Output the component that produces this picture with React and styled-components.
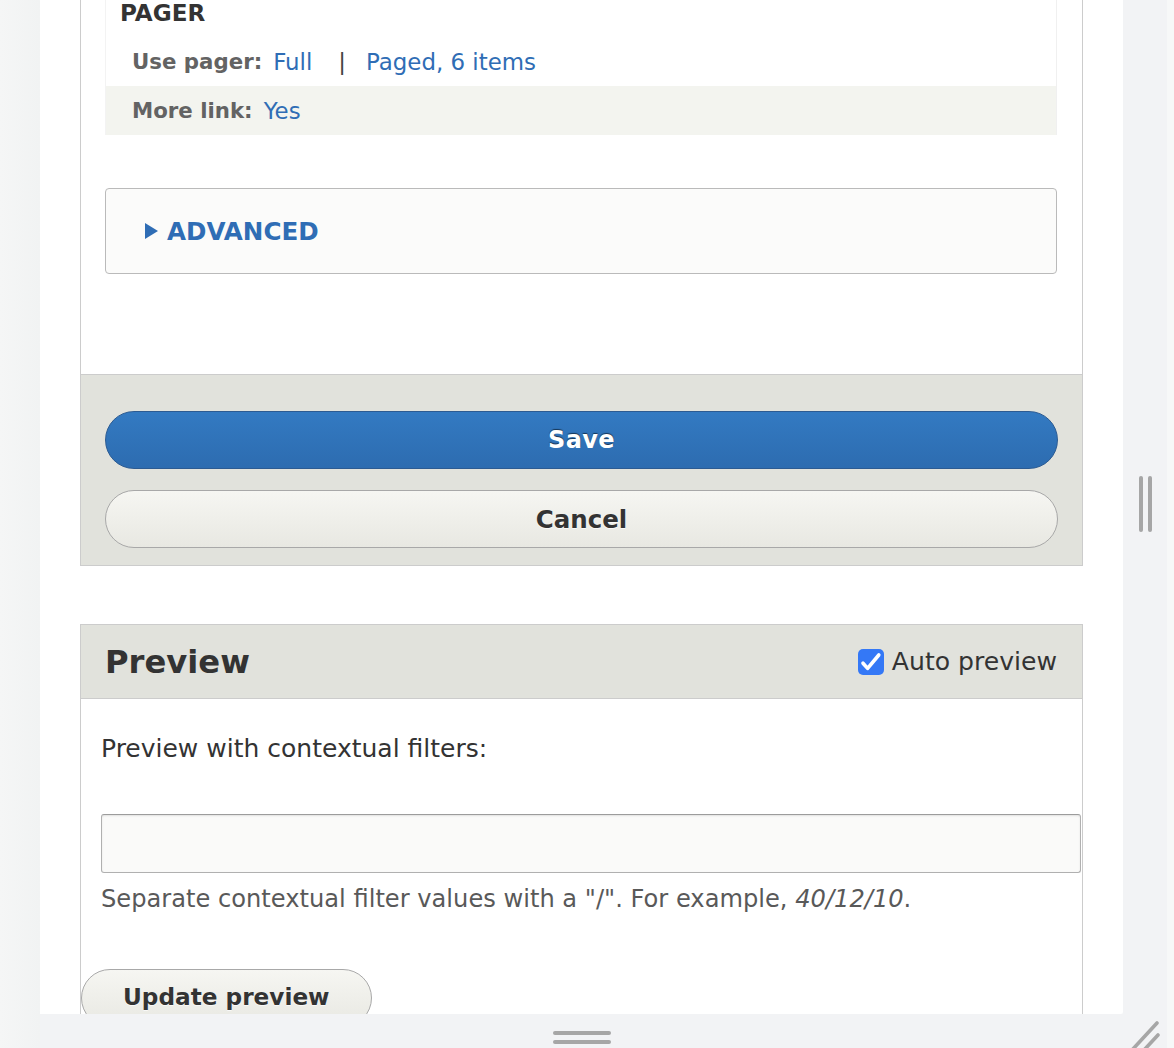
import React from "react";
import styled, { createGlobalStyle } from "styled-components";

const Global = createGlobalStyle`
  html, body { margin: 0; padding: 0; }
  body {
    width: 1174px;
    height: 1048px;
    overflow: hidden;
    font-family: "DejaVu Sans", "Liberation Sans", sans-serif;
    color: #333;
    background: #f7f8f8;
  }
  * { box-sizing: border-box; }
`;

const Shell = styled.div`
  display: grid;
  grid-template-columns: 40px 1083px 44px 7px;
  grid-template-rows: 1014px 34px;
  width: 1174px;
  height: 1048px;
  overflow: hidden;
`;

const LeftStrip = styled.div`
  grid-column: 1;
  grid-row: 1 / span 2;
  background: linear-gradient(to right, #f5f6f6, #f1f3f3);
`;

const FarStrip = styled.div`
  grid-column: 4;
  grid-row: 1 / span 2;
  background: #f7f8f8;
`;

const Frame = styled.div`
  grid-column: 2;
  grid-row: 1;
  background: #fff;
  overflow: hidden;
  border-bottom-right-radius: 3px;
  padding: 0 40px;
`;

const Scroller = styled.div`
  margin-top: -2px;
  display: flex;
  flex-direction: column;
`;

const SideBar = styled.div`
  grid-column: 3;
  grid-row: 1;
  background: #f2f3f5;
  display: flex;
  align-items: center;
  justify-content: center;
  gap: 5px;
  padding-bottom: 6px;
`;

const VGrip = styled.span`
  display: block;
  width: 4px;
  height: 56px;
  border-radius: 2px;
  background: #a6a6a6;
`;

const BottomBar = styled.div`
  grid-column: 2;
  grid-row: 2;
  background: #f2f3f5;
  display: flex;
  flex-direction: column;
  align-items: center;
  gap: 5px;
  padding-top: 17px;
`;

const HGrip = styled.span`
  display: block;
  width: 58px;
  height: 4px;
  border-radius: 2px;
  background: #a6a6a6;
`;

const Corner = styled.div`
  grid-column: 3;
  grid-row: 2;
  background: #f2f3f5;
  display: flex;
`;

const Panel = styled.div`
  border-left: 1px solid #ccc;
  border-right: 1px solid #ccc;
  background: #fff;
`;

const PanelBody = styled.div`
  padding: 0 25px 100px 24px;
`;

const DisplayBox = styled.div`
  background: #fff;
  border-left: 1px solid #f3f3f3;
  border-right: 1px solid #f0f0f0;
`;

const BoxTitle = styled.div`
  font-size: 23.1px;
  font-weight: 700;
  line-height: 30px;
  padding-left: 14px;
  margin-bottom: 9px;
  color: #333;
`;

const DetailRow = styled.div`
  height: 49px;
  display: flex;
  align-items: center;
  padding-left: 26px;
  background: ${(p) => (p.$alt ? "#f3f4ef" : "#fff")};
  font-size: 22.9px;
  white-space: nowrap;
`;

const RowLabel = styled.span`
  font-weight: 700;
  font-size: 21.3px;
  color: #636363;
  margin-right: 11px;
`;

const Link = styled.a`
  color: #2f6db5;
  text-decoration: none;
`;

const Sep = styled.span`
  color: #444;
  margin: 0 20px 0 26px;
`;

const Details = styled.div`
  margin-top: 53px;
  height: 86px;
  border: 1px solid #bababa;
  border-radius: 4px;
  background: #fbfbfa;
  display: flex;
  align-items: center;
  padding-left: 39px;
  gap: 9px;
  color: #2f6db5;
  font-weight: 700;
  font-size: 24.6px;
`;

const Triangle = styled.span`
  display: block;
  width: 0;
  height: 0;
  border-top: 8px solid transparent;
  border-bottom: 8px solid transparent;
  border-left: 13px solid #2f6db5;
`;

const ButtonBar = styled.div`
  background: #e1e2dc;
  border-top: 1px solid #ccc;
  border-bottom: 1px solid #ccc;
  padding: 36px 24px 17px 24px;
  display: flex;
  flex-direction: column;
  gap: 21px;
`;

const Button = styled.button`
  display: block;
  height: 58px;
  width: ${(p) => (p.$inline ? "auto" : "100%")};
  padding: 0 ${(p) => (p.$inline ? "41px" : "0")} ${(p) => (p.$inline ? "3px" : "0")};
  border-radius: 30px;
  font-family: "DejaVu Sans", "Liberation Sans", sans-serif;
  font-weight: 700;
  font-size: ${(p) => (p.$inline ? "23.2px" : p.$primary ? "24px" : "24.5px")};
  cursor: pointer;
  border: 1px solid ${(p) => (p.$primary ? "#2c5b92" : "#a8a8a8")};
  color: ${(p) => (p.$primary ? "#fff" : "#333")};
  background: ${(p) =>
    p.$primary
      ? "linear-gradient(to bottom, #337ac2, #2d6cb0)"
      : "linear-gradient(to bottom, #f6f6f2, #e8e8e2)"};
  text-shadow: ${(p) =>
    p.$primary ? "0 -1px 1px rgba(0,0,0,0.55)" : "0 1px 0 rgba(255,255,255,0.7)"};
  letter-spacing: ${(p) => (p.$primary ? "0.4px" : "0")};
`;

const PreviewPanel = styled.section`
  margin-top: 58px;
  border: 1px solid #ccc;
  border-bottom: none;
  background: #fff;
`;

const PreviewHeader = styled.header`
  height: 74px;
  background: #e1e2dc;
  border-bottom: 1px solid #ccc;
  display: flex;
  align-items: center;
  justify-content: space-between;
  padding: 0 25px 0 24px;
`;

const PreviewTitle = styled.h2`
  margin: 0;
  font-size: 32.2px;
  font-weight: 700;
  color: #333;
`;

const CheckLabel = styled.label`
  display: flex;
  align-items: center;
  gap: 8px;
  font-size: 25.1px;
  color: #333;
  cursor: pointer;
`;

const CheckBox = styled.span`
  width: 26px;
  height: 26px;
  border-radius: 5px;
  background: #3478f6;
  display: flex;
  align-items: center;
  justify-content: center;
`;

const PreviewBody = styled.div`
  padding: 35px 0 0 20px;
  display: flex;
  flex-direction: column;
  align-items: stretch;
`;

const FieldLabel = styled.label`
  font-size: 25px;
  line-height: 30px;
  color: #333;
`;

const TextInput = styled.input`
  margin-top: 50px;
  width: calc(100% - 1px);
  height: 59px;
  border: 1px solid #b0b0b0;
  border-top-color: #9c9c9c;
  border-radius: 3px;
  background: #fafaf9;
  box-shadow: inset 0 1px 2px rgba(0, 0, 0, 0.1);
  font-size: 22px;
  font-family: "DejaVu Sans", sans-serif;
`;

const Description = styled.div`
  margin-top: 11px;
  font-size: 24.15px;
  line-height: 30px;
  color: #595959;
  white-space: nowrap;
`;

const ActionRow = styled.div`
  margin: 55px 0 0 -20px;
  display: flex;
`;

export default function App() {
  return (
    <>
      <Global />
      <Shell>
        <LeftStrip />
        <Frame>
          <Scroller>
            <Panel>
              <PanelBody>
                <DisplayBox>
                  <BoxTitle>PAGER</BoxTitle>
                  <DetailRow>
                    <RowLabel>Use pager:</RowLabel>
                    <Link href="#">Full</Link>
                    <Sep>|</Sep>
                    <Link href="#">Paged, 6 items</Link>
                  </DetailRow>
                  <DetailRow $alt>
                    <RowLabel>More link:</RowLabel>
                    <Link href="#">Yes</Link>
                  </DetailRow>
                </DisplayBox>
                <Details>
                  <Triangle />
                  <span>ADVANCED</span>
                </Details>
              </PanelBody>
              <ButtonBar>
                <Button $primary>Save</Button>
                <Button>Cancel</Button>
              </ButtonBar>
            </Panel>
            <PreviewPanel>
              <PreviewHeader>
                <PreviewTitle>Preview</PreviewTitle>
                <CheckLabel>
                  <CheckBox role="checkbox" aria-checked="true">
                    <svg width="26" height="26" viewBox="0 0 26 26">
                      <path
                        d="M5 14.2 L9.6 19.4 L20.8 6"
                        fill="none"
                        stroke="#fff"
                        strokeWidth="3.6"
                        strokeLinecap="round"
                        strokeLinejoin="round"
                      />
                    </svg>
                  </CheckBox>
                  Auto preview
                </CheckLabel>
              </PreviewHeader>
              <PreviewBody>
                <FieldLabel>Preview with contextual filters:</FieldLabel>
                <TextInput type="text" />
                <Description>
                  Separate contextual filter values with a "/". For example, <em>40/12/10</em>.
                </Description>
                <ActionRow>
                  <Button $inline>Update preview</Button>
                </ActionRow>
              </PreviewBody>
            </PreviewPanel>
          </Scroller>
        </Frame>
        <SideBar>
          <VGrip />
          <VGrip />
        </SideBar>
        <BottomBar>
          <HGrip />
          <HGrip />
        </BottomBar>
        <Corner>
          <svg width="44" height="34" viewBox="0 0 44 34">
            <path d="M34 9 L10 35" stroke="#a6a6a6" strokeWidth="3.6" strokeLinecap="round" />
            <path d="M35 21 L22 35" stroke="#a6a6a6" strokeWidth="3.6" strokeLinecap="round" />
          </svg>
        </Corner>
        <FarStrip />
      </Shell>
    </>
  );
}
